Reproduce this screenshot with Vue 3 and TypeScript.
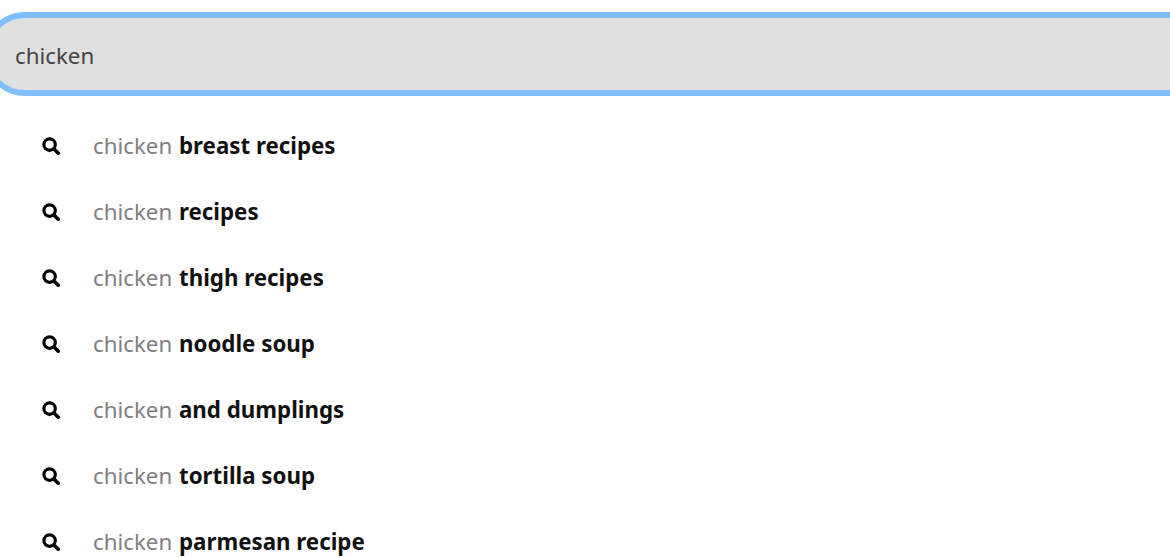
<script setup lang="ts">
const query = "chicken";
const suggestions = [
  "breast recipes",
  "recipes",
  "thigh recipes",
  "noodle soup",
  "and dumplings",
  "tortilla soup",
  "parmesan recipe",
];
</script>

<template>
  <div class="page">
    <div class="search-box">{{ query }}</div>
    <ul class="list">
      <li v-for="item in suggestions" :key="item" class="row">
        <svg class="icon" viewBox="0 0 18 18" fill="none" stroke="#000">
          <circle cx="7.6" cy="7.6" r="5.7" stroke-width="3.2" />
          <path d="M12 12L16.2 16.2" stroke-width="3.6" stroke-linecap="round" />
        </svg>
        <span class="text">{{ query }} <b>{{ item }}</b></span>
      </li>
    </ul>
  </div>
</template>

<style>
html,
body {
  margin: 0;
  background: #fff;
  overflow: hidden;
}
</style>

<style scoped>
.page {
  height: 558px;
  overflow: hidden;
  font-family: "Noto Sans", "Open Sans", sans-serif;
}

.search-box {
  box-sizing: border-box;
  height: 84px;
  margin: 12px -40px 0 -17px;
  padding: 2px 0 0 26px;
  display: flex;
  align-items: center;
  background: #e0e0e0;
  border: 6px solid #80bfff;
  border-radius: 42px;
  font-size: 22.3px;
  color: #444;
}

.list {
  list-style: none;
  margin: 17px 0 0;
  padding: 0;
}

.row {
  height: 66px;
  display: flex;
  align-items: center;
  padding-left: 42px;
  font-size: 22.3px;
}

.icon {
  width: 18px;
  height: 18px;
  margin-right: 33px;
}

.text {
  margin-bottom: 2px;
  color: #808080;
}

.text b {
  margin-left: 1px;
  font-size: 22.3px;
  color: #111;
  font-weight: 700;
}
</style>
